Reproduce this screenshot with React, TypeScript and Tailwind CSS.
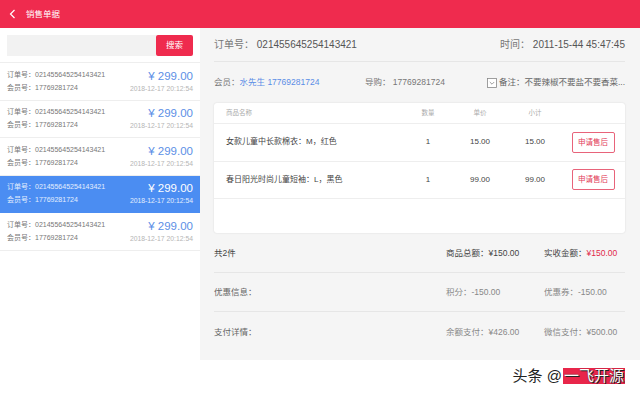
import React from "react";

const FONT = { fontFamily: '"Liberation Sans", "Noto Sans CJK SC", sans-serif' };

const items = [0, 1, 2, 3, 4];

function ListItem({ selected }: { selected: boolean }) {
  return (
    <div
      className={`h-[37.5px] flex items-center justify-between px-[7px] border-b ${
        selected ? "bg-[#4b8df2] border-[#4b8df2]" : "bg-white border-[#eeeeee]"
      }`}
    >
      <div className="flex flex-col gap-[5px] text-[7px] leading-[8px]">
        <div className={selected ? "text-white/85" : "text-[#777]"}>订单号：021455645254143421</div>
        <div className={selected ? "text-white/85" : "text-[#777]"}>会员号：17769281724</div>
      </div>
      <div className="flex flex-col items-end gap-[3px]">
        <div className={`text-[11.5px] leading-[12px] ${selected ? "text-white" : "text-[#5c8fe6]"}`}>¥ 299.00</div>
        <div className={`text-[6.8px] leading-[8px] ${selected ? "text-white/85" : "text-[#b5b5b5]"}`}>2018-12-17 20:12:54</div>
      </div>
    </div>
  );
}

function Row({ name, qty, price, sub }: { name: string; qty: string; price: string; sub: string }) {
  return (
    <div className="h-[37.5px] flex items-center border-b border-[#eeeeee] text-[8px] text-[#444]">
      <div className="w-[190px] pl-[12px]">{name}</div>
      <div className="w-[48px] text-center">{qty}</div>
      <div className="w-[56px] text-center">{price}</div>
      <div className="w-[54px] text-center">{sub}</div>
      <div className="w-[62px] flex justify-center">
        <div className="w-[43px] h-[21px] flex items-center justify-center border border-[#e8637a] rounded-[2px] text-[#e23a57] text-[7.5px]">
          申请售后
        </div>
      </div>
    </div>
  );
}

export default function App() {
  return (
    <div className="w-[640px] h-[398px] bg-white flex flex-col overflow-hidden" style={FONT}>
      <div className="h-[28px] bg-[#ef2b4e] flex items-center text-white shrink-0">
        <svg width="7" height="10" viewBox="0 0 7 10" className="ml-[9px]">
          <path d="M5.5 1 L1.5 5 L5.5 9" fill="none" stroke="white" strokeWidth="1.2" />
        </svg>
        <span className="ml-[10px] text-[8.5px]">销售单据</span>
      </div>
      <div className="h-[332px] flex shrink-0">
        <div className="w-[200px] bg-white flex flex-col shrink-0">
          <div className="h-[35px] flex items-center px-[7px] border-b border-[#eeeeee]">
            <div className="w-[149px] h-[21px] bg-[#f2f2f2]" />
            <div className="w-[37px] h-[21px] bg-[#ef2b4e] rounded-[2px] flex items-center justify-center text-white text-[8.5px]">
              搜索
            </div>
          </div>
          {items.map((i) => (
            <ListItem key={i} selected={i === 3} />
          ))}
        </div>
        <div className="flex-1 bg-[#f5f5f5] pl-[14px] pr-[15px] flex flex-col">
          <div className="h-[34px] flex items-center justify-between border-b border-[#e6e6e6] text-[10px] text-[#555]">
            <div>
              <span className="text-[#777]">订单号：</span> 021455645254143421
            </div>
            <div>
              <span className="text-[#777]">时间：</span> 2011-15-44 45:47:45
            </div>
          </div>
          <div className="h-[41px] flex items-center text-[8.5px] text-[#777] whitespace-nowrap">
            <div className="w-[151px]">
              会员：<span className="text-[#5a8de6]">水先生 17769281724</span>
            </div>
            <div className="w-[120px]">导购： 17769281724</div>
            <div className="flex-1 flex items-center justify-end gap-[2px] text-[#666]">
              <svg width="10" height="10" viewBox="0 0 10 10" className="shrink-0">
                <rect x="0.5" y="0.5" width="9" height="9" fill="white" stroke="#888" strokeWidth="0.8" />
                <path d="M2.8 4 L5 6.2 L7.2 4" fill="none" stroke="#888" strokeWidth="0.8" />
              </svg>
              <span>备注：不要辣椒不要盐不要香菜...</span>
            </div>
          </div>
          <div className="h-[130px] bg-white rounded-[3px] shadow-[0_0_2px_rgba(0,0,0,0.12)] flex flex-col">
            <div className="h-[21px] flex items-center border-b border-[#eeeeee] text-[6.5px] text-[#aaa]">
              <div className="w-[190px] pl-[12px]">商品名称</div>
              <div className="w-[48px] text-center">数量</div>
              <div className="w-[56px] text-center">单价</div>
              <div className="w-[54px] text-center">小计</div>
            </div>
            <Row name="女款儿童中长款棉衣：M，红色" qty="1" price="15.00" sub="15.00" />
            <Row name="春日阳光时尚儿童短袖：L，黑色" qty="1" price="99.00" sub="99.00" />
          </div>
          <div className="h-[38px] mt-[2px] flex items-center border-b border-[#e6e6e6] text-[8.5px] text-[#444]">
            <div className="flex-1">共2件</div>
            <div className="w-[98px]">商品总额：¥150.00</div>
            <div className="w-[81px]">
              实收金额：<span className="text-[#e2284a]">¥150.00</span>
            </div>
          </div>
          <div className="h-[39px] flex items-center border-b border-[#e6e6e6] text-[8.5px] text-[#666]">
            <div className="flex-1">优惠信息：</div>
            <div className="w-[98px] text-[#888]">积分：-150.00</div>
            <div className="w-[81px] text-[#888]">优惠券：-150.00</div>
          </div>
          <div className="h-[40px] flex items-center text-[8.5px] text-[#666]">
            <div className="flex-1">支付详情：</div>
            <div className="w-[98px] text-[#888]">余额支付：¥426.00</div>
            <div className="w-[81px] text-[#888]">微信支付：¥500.00</div>
          </div>
        </div>
      </div>
      <div className="flex-1 flex items-start justify-end pr-[15px] pt-[8px]">
        <div className="flex items-center text-[15px] leading-[16px]">
          <span className="text-[#222]" style={{ textShadow: "0 0 1px #fff, 1px 1px 0 #fff" }}>
            头条 @
          </span>
          <span
            className="bg-[#e8264a] px-[1px] ml-[1px] text-white"
            style={{ textShadow: "1px 1px 0 #222, 0 0 1px #222" }}
          >
            一飞开源
          </span>
        </div>
      </div>
    </div>
  );
}
